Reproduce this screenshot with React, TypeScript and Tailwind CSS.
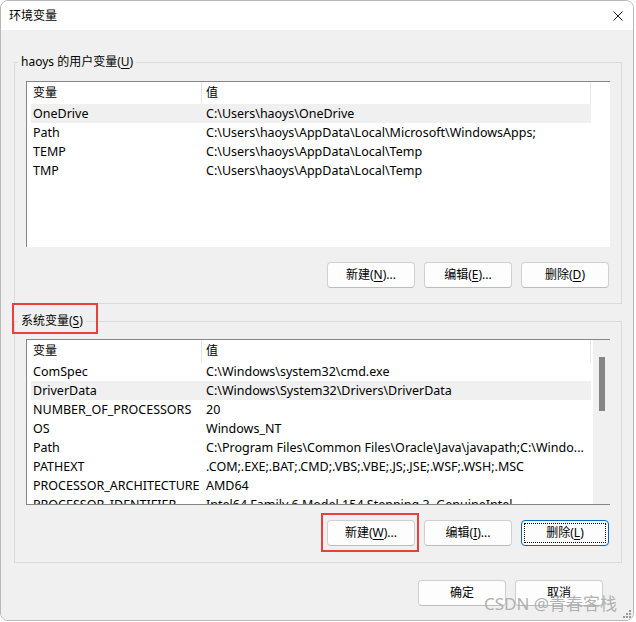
import { ReactElement, ReactNode } from 'react';

type Row = { name: string; value: string };

const USER_VARS: Row[] = [
  { name: 'OneDrive', value: 'C:\\Users\\haoys\\OneDrive' },
  { name: 'Path', value: 'C:\\Users\\haoys\\AppData\\Local\\Microsoft\\WindowsApps;' },
  { name: 'TEMP', value: 'C:\\Users\\haoys\\AppData\\Local\\Temp' },
  { name: 'TMP', value: 'C:\\Users\\haoys\\AppData\\Local\\Temp' },
];

const SYSTEM_VARS: Row[] = [
  { name: 'ComSpec', value: 'C:\\Windows\\system32\\cmd.exe' },
  { name: 'DriverData', value: 'C:\\Windows\\System32\\Drivers\\DriverData' },
  { name: 'NUMBER_OF_PROCESSORS', value: '20' },
  { name: 'OS', value: 'Windows_NT' },
  {
    name: 'Path',
    value: 'C:\\Program Files\\Common Files\\Oracle\\Java\\javapath;C:\\Windo...',
  },
  { name: 'PATHEXT', value: '.COM;.EXE;.BAT;.CMD;.VBS;.VBE;.JS;.JSE;.WSF;.WSH;.MSC' },
  { name: 'PROCESSOR_ARCHITECTURE', value: 'AMD64' },
  { name: 'PROCESSOR_IDENTIFIER', value: 'Intel64 Family 6 Model 154 Stepping 3, GenuineIntel' },
];

const Button = ({
  children,
  focused,
  marked,
}: {
  children: ReactNode;
  focused?: boolean;
  marked?: boolean;
}): ReactElement => (
  <button
    className={`relative h-[26px] w-[88px] rounded-[4px] border bg-[#fdfdfd] text-[12px] leading-[16px] text-black ${
      focused ? 'border-[#0067c0]' : 'border-[#d0d0d0] border-b-[#bcbcbc]'
    }`}
  >
    {children}
    {focused && (
      <span className="absolute inset-[2px] border border-dotted border-black" />
    )}
    {marked && (
      <span className="absolute -bottom-[7px] -left-[7px] -right-[5px] -top-[8px] border-2 border-[#e8413b]" />
    )}
  </button>
);

const VarList = ({
  rows,
  active,
  scroll,
}: {
  rows: Row[];
  active: number;
  scroll?: boolean;
}): ReactElement => (
  <div
    className={`flex h-[166px] overflow-hidden border-l border-t border-[#868686] bg-white ${
      scroll ? 'border-b' : ''
    }`}
  >
    <div className="flex-1 overflow-hidden pl-[4px]">
      <div className="flex h-[22px] w-[560px]">
        <div className="flex w-[171px] items-center border-r border-[#e5e5e5] pl-[2px]">
          变量
        </div>
        <div className="flex flex-1 items-center border-r border-[#e5e5e5] pl-[4px]">
          值
        </div>
      </div>
      {rows.map((row, i) => (
        <div
          key={row.name}
          className={`flex h-[19px] w-[560px] items-center whitespace-nowrap text-[12.5px] ${
            i === active ? 'bg-[#f0f0f0]' : ''
          }`}
        >
          <div className="w-[171px] overflow-hidden pl-[2px]">{row.name}</div>
          <div className="w-[389px] overflow-hidden pl-[4px]">{row.value}</div>
        </div>
      ))}
    </div>
    {scroll && (
      <div className="flex w-[17px] justify-center bg-[#f0f0f0] pt-[17px]">
        <div className="h-[54px] w-[6px] bg-[#858585]" />
      </div>
    )}
  </div>
);

export default function App(): ReactElement {
  return (
    <div className="h-[622px] w-[636px] overflow-hidden bg-white font-['Noto_Sans','Noto_Sans_CJK_SC',sans-serif] text-[12px] leading-[16px] text-black">
      <div className="relative flex h-[621px] w-[634px] flex-col overflow-hidden rounded-[8px] border border-[#b8b8b8]">
        {/* title bar */}
        <div className="flex h-[29px] shrink-0 items-center justify-between bg-white pl-[8px] pr-[10px]">
          <span>环境变量</span>
          <svg width="10" height="10" viewBox="0 0 10 10">
            <path d="M0.5 0.5 L9.5 9.5 M9.5 0.5 L0.5 9.5" stroke="#1a1a1a" strokeWidth="1" />
          </svg>
        </div>

        <div className="flex flex-1 flex-col bg-[#f0f0f0] pl-[13px] pr-[11px] pt-[24px]">
          <fieldset className="border border-[#dadada] px-[11px] pb-[15px]">
            <legend className="-ml-[8px] px-[3px]">
              haoys 的用户变量(<u className="underline-offset-2">U</u>)
            </legend>
            <div className="mt-[11px]">
              <VarList rows={USER_VARS} active={0} />
            </div>
            <div className="mt-[15px] flex justify-end gap-[9px] pr-[1px]">
              <Button>
                新建(<u className="underline-offset-2">N</u>)...
              </Button>
              <Button>
                编辑(<u className="underline-offset-2">E</u>)...
              </Button>
              <Button>
                删除(<u className="underline-offset-2">D</u>)
              </Button>
            </div>
          </fieldset>

          <fieldset className="mt-[9px] border border-[#dadada] px-[11px] pb-[16px]">
            <legend className="relative -ml-[8px] px-[3px]">
              系统变量(<u className="underline-offset-2">S</u>)
              <span className="absolute -bottom-[5px] -left-[6px] -right-[12px] -top-[10px] border-2 border-[#e8413b]" />
            </legend>
            <div className="mt-[10px]">
              <VarList rows={SYSTEM_VARS} active={1} scroll />
            </div>
            <div className="mt-[15px] flex justify-end gap-[9px] pr-[1px]">
              <Button marked>
                新建(<u className="underline-offset-2">W</u>)...
              </Button>
              <Button>
                编辑(<u className="underline-offset-2">I</u>)...
              </Button>
              <Button focused>
                删除(<u className="underline-offset-2">L</u>)
              </Button>
            </div>
          </fieldset>

          <div className="mr-[19px] mt-[17px] flex justify-end gap-[9px]">
            <Button>确定</Button>
            <Button>取消</Button>
          </div>
        </div>

        {/* watermark */}
        <span className="absolute left-[483px] top-[592px] text-[17px] leading-[22px] text-[#a8a8a8]/90">
          CSDN @青春客栈
        </span>

        {/* resize grip */}
        <svg className="absolute bottom-[2px] right-[2px]" width="9" height="9" viewBox="0 0 9 9">
          <g fill="#9a9a9a">
            <rect x="7" y="1" width="2" height="2" />
            <rect x="4" y="4" width="2" height="2" />
            <rect x="7" y="4" width="2" height="2" />
            <rect x="1" y="7" width="2" height="2" />
            <rect x="4" y="7" width="2" height="2" />
            <rect x="7" y="7" width="2" height="2" />
          </g>
        </svg>
      </div>
    </div>
  );
}
